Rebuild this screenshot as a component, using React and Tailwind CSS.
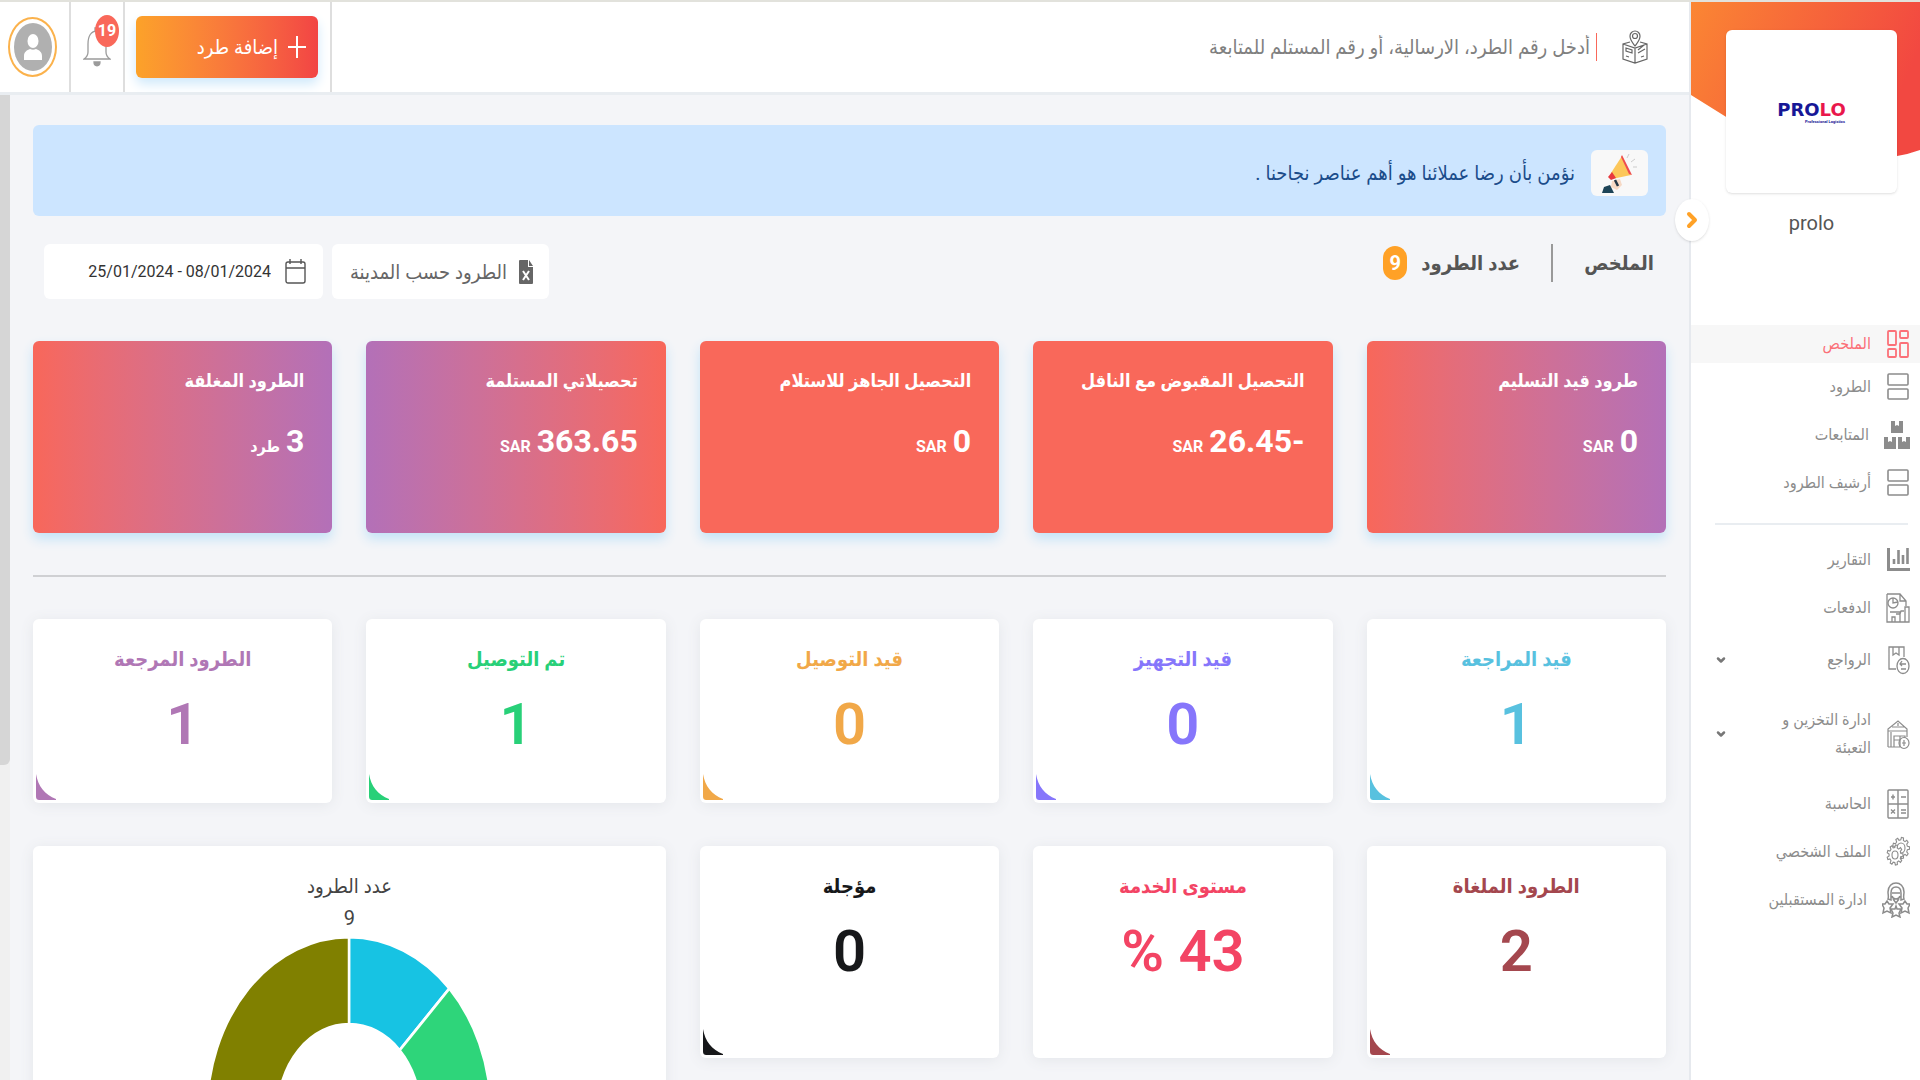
import { ChevronDown, ChevronRight } from 'lucide-react'

const NAV_TOP = [
  { key: 'summary', label: 'الملخص', icon: GridIcon, active: true },
  { key: 'parcels', label: 'الطرود', icon: RowsIcon },
  { key: 'follow', label: 'المتابعات', icon: BoxesIcon },
  { key: 'archive', label: 'أرشيف الطرود', icon: RowsIcon },
]

const NAV_BOTTOM = [
  { key: 'reports', label: 'التقارير', icon: ReportsIcon, height: 'h-12' },
  { key: 'payments', label: 'الدفعات', icon: PaymentsIcon, height: 'h-12' },
  { key: 'returns', label: 'الرواجع', icon: ReturnsIcon, height: 'h-14', expandable: true },
  { key: 'storage', label: 'ادارة التخزين و التعبئة', icon: WarehouseIcon, height: 'h-[92px]', expandable: true },
  { key: 'calc', label: 'الحاسبة', icon: CalcIcon, height: 'h-12' },
  { key: 'profile', label: 'الملف الشخصي', icon: GearsIcon, height: 'h-12' },
  { key: 'receivers', label: 'ادارة المستقبلين', icon: ReceiversIcon, height: 'h-12' },
]

const MONEY = [
  { title: 'طرود قيد التسليم', value: '0', unit: 'SAR', bg: 'bg-gradient-to-r from-[#f8675a] to-[#b370b8]' },
  { title: 'التحصيل المقبوض مع الناقل', value: '-26.45', unit: 'SAR', bg: 'bg-[#f9685a]' },
  { title: 'التحصيل الجاهز للاستلام', value: '0', unit: 'SAR', bg: 'bg-[#f9685a]' },
  { title: 'تحصيلاتي المستلمة', value: '363.65', unit: 'SAR', bg: 'bg-gradient-to-l from-[#f8675a] to-[#b370b8]' },
  { title: 'الطرود المغلقة', value: '3', unit: 'طرد', bg: 'bg-gradient-to-r from-[#f8675a] to-[#b370b8]' },
]

const STATUS = [
  { title: 'قيد المراجعة', value: '1', color: 'text-[#58c1df]' },
  { title: 'قيد التجهيز', value: '0', color: 'text-[#8676fb]' },
  { title: 'قيد التوصيل', value: '0', color: 'text-[#f1a848]' },
  { title: 'تم التوصيل', value: '1', color: 'text-[#28d078]' },
  { title: 'الطرود المرجعة', value: '1', color: 'text-[#b077b5]' },
]

const EXTRA = [
  { title: 'الطرود الملغاة', value: '2', color: 'text-[#a4474e]' },
  { title: 'مستوى الخدمة', value: '43 %', color: 'text-[#f34464]', plain: true },
  { title: 'مؤجلة', value: '0', color: 'text-[#17181a]' },
]

/* ---------- icons ---------- */

function Icon({ children, className = 'w-6 h-8', box = '0 0 24 32', width = 1.3 }) {
  return (
    <svg viewBox={box} className={`shrink-0 ${className}`} fill="none" stroke="currentColor" strokeWidth={width} aria-hidden="true">
      {children}
    </svg>
  )
}

function GridIcon() {
  return (
    <Icon width={1.8}>
      <rect x="2" y="3" width="8" height="14" rx="1" />
      <rect x="14" y="3" width="8" height="7" rx="1" />
      <rect x="2" y="21" width="8" height="8" rx="1" />
      <rect x="14" y="15" width="8" height="14" rx="1" />
    </Icon>
  )
}

function RowsIcon() {
  return (
    <Icon width={1.6}>
      <rect x="2" y="3" width="20" height="11" rx="1" />
      <rect x="2" y="18" width="20" height="10" rx="1" />
    </Icon>
  )
}

function BoxesIcon() {
  return (
    <Icon className="w-[26px] h-8" box="0 0 26 32">
      <g fill="currentColor" stroke="none">
        <path d="M7 2h4v5l2-1 2 1V2h4v12H7z" />
        <path d="M0 18h4v5l2-1 2 1v-5h4v12H0z" />
        <path d="M14 18h4v5l2-1 2 1v-5h4v12H14z" />
      </g>
    </Icon>
  )
}

function ReportsIcon() {
  return (
    <Icon width={3}>
      <path d="M2.5 4v21.5H24" />
      <path d="M8 20v-5M12.500 20V6M17 20v-9M21.500 20V4" strokeWidth="2.600" />
    </Icon>
  )
}

function PaymentsIcon() {
  return (
    <Icon>
      <path d="M1 2h13l6 7v5M1 2v28h22V15h-4v15M14 2v7h6" />
      <circle cx="7" cy="11" r="5" />
      <path d="M7 6v5l5-1M4 20h10v10M6 30v-5h3v5M10 22h4M14 22l1-3h3" />
    </Icon>
  )
}

function ReturnsIcon() {
  return (
    <Icon>
      <path d="M10 25H3V3h15v10M7 3v8l3-2 3 2V3" />
      <ellipse cx="17" cy="22" rx="6" ry="7.500" />
      <path d="M14 20h6M16 17l-2 3 2 2M15 25h5" />
    </Icon>
  )
}

function WarehouseIcon() {
  return (
    <Icon width={1.2}>
      <path d="M2 29V11L12 3l9 8v8M2 13h19M6 9h12M5 29V14M8 29V18h6v11M14 18h5v2M12 5v3M8 22h6" />
      <ellipse cx="18" cy="25" rx="5" ry="5.500" />
      <path d="M18 22v6M16 25h4M2 29h12" />
    </Icon>
  )
}

function CalcIcon() {
  return (
    <Icon width={1.4}>
      <rect x="2" y="2" width="20" height="28" rx="1" />
      <path d="M12 2v28M2 16h20M5 9h4M7 6.500v5M15 9h5M15 22h5M15 25h5M5 21.500l4 4M9 21.500l-4 4" />
    </Icon>
  )
}

// toothed outline around (cx, cy), a bit taller than wide
function gearPath(cx, cy, outer, inner, teeth) {
  const step = (Math.PI * 2) / teeth
  const pts = []
  for (let i = 0; i < teeth; i++) {
    for (const [k, r] of [[-0.3, inner], [-0.18, outer], [0.18, outer], [0.3, inner]]) {
      const a = (i + k) * step
      pts.push(`${(cx + r * Math.cos(a)).toFixed(2)} ${(cy + r * 1.25 * Math.sin(a)).toFixed(2)}`)
    }
  }
  return `M${pts.join('L')}Z`
}

function GearsIcon() {
  return (
    <Icon width={1.1}>
      <path d={gearPath(15, 12, 8.5, 6.5, 9)} />
      <ellipse cx="15" cy="12" rx="4" ry="5" />
      <path d={gearPath(9, 19, 8, 6, 9)} fill="#fff" />
      <ellipse cx="9" cy="19" rx="3" ry="4" />
    </Icon>
  )
}

function ReceiversIcon() {
  return (
    <Icon className="w-7 h-9" box="0 0 28 36" width={1.5}>
      <path d="M6 17c1-2 0-4 0-7 0-6 4-9 8-9s8 3 8 9c0 3-1 5 0 7l-3 1v-7c0-4-2-6-5-6s-5 2-5 6v7zM10 11h8M10 14c1 4 7 4 8 0M11 17l3 4 3-4" />
      <path d="M5 19l2 3h4l-3 4 1 5-4-2-4 2 1-5-2-4h3zM23 19l-2 3h-4l3 4-1 5 4-2 4 2-1-5 2-4h-3z" />
      <path d="M14 24l1 3 4 0-2 4 1 4-4-2-4 2 1-4-2-4 4 0z" fill="#fff" />
    </Icon>
  )
}

function TrackIcon() {
  return (
    <Icon className="w-7 h-9 text-[#666]" box="0 0 28 36" width={1.2}>
      <path d="M14 17c-3-4-5-6-5-10a5 5 0 0 1 10 0c0 4-2 6-5 10z" />
      <circle cx="14" cy="7" r="2.500" />
      <path d="M9 13l-7 2v15l12 4 12-4V15l-7-2M2 15l12 4 12-4M14 19v15M5 19l6 2v3l-6-2zM17 24l7-4M17 21l6-5M5 27l3 1M20 28l3-1" />
    </Icon>
  )
}

function BellIcon() {
  return (
    <Icon className="w-7 h-10 text-[#9b9b9b]" box="0 0 28 40">
      <path d="M5 25V17c0-8 3-13 9-13s9 5 9 13v8c0 3 1 5 4 7H1c3-2 4-4 4-7zM12 4V1h4v3" />
      <path d="M11 35h6c0 5-6 5-6 0z" fill="currentColor" />
    </Icon>
  )
}

function MegaphoneIcon() {
  return (
    <svg viewBox="0 0 57 46" className="h-[46px] w-[57px] shrink-0 rounded-md bg-[#f8f8f8]" aria-hidden="true">
      <path d="M31 6l9 19-19 4-1-6z" fill="#fcc75a" />
      <path d="M31 5l10 20-3-1-8-17z" fill="#ee4b50" />
      <path d="M21 22l4 6-5 2-3-3z" fill="#e8383d" />
      <path d="M21 31l8-2 2 6-5 5-6-3z" fill="#f6d9c5" />
      <path d="M24 30l3 6" stroke="#243746" strokeWidth="2.500" />
      <path d="M13 37l6-2 4 8H11z" fill="#1d4457" />
      <path d="M36 8l2-4M40 12l4-3M42 17l4 0" stroke="#ccc" strokeWidth="1" />
    </svg>
  )
}

/* ---------- sidebar ---------- */

function NavItem({ item, height = 'h-12' }) {
  const Glyph = item.icon
  return (
    <li>
      <a
        href={`#${item.key}`}
        className={`flex items-center gap-[15px] pr-[10px] pl-6 text-base ${height} ${
          item.active ? 'bg-[#f7f7f7] text-[#fb7078]' : 'text-[#8c8c8c]'
        }`}
      >
        <Glyph />
        <span className={item.expandable ? 'w-[92px] leading-7' : 'flex-1 leading-7'}>{item.label}</span>
        {item.expandable && <ChevronDown className="mr-auto size-3 text-[#777]" strokeWidth={5} />}
      </a>
    </li>
  )
}

function Sidebar() {
  return (
    <aside className="relative w-[231px] shrink-0 border-l-2 border-[#e6e9ee] bg-white">
      <svg viewBox="0 0 230 160" preserveAspectRatio="none" className="absolute top-0 right-0 h-40 w-full" aria-hidden="true">
        <defs>
          <linearGradient id="wave" x1="0" y1="0" x2="1" y2="0.300">
            <stop offset="0" stopColor="#fb8633" />
            <stop offset="1" stopColor="#f24841" />
          </linearGradient>
        </defs>
        <path d="M0 0H230V148Q219 152 207 154C180 156 150 150 120 140C90 130 60 129 37 116L0 93Z" fill="url(#wave)" />
      </svg>

      <div className="relative flex flex-col items-center pt-7 pl-3" dir="ltr">
        <div className="flex h-[163px] w-[171px] flex-col items-center justify-center rounded-md bg-white shadow">
          <div className="font-['DejaVu_Sans',sans-serif] text-lg leading-5 font-bold text-[#171796]">
            PRO<span className="text-[#e9174b]">LO</span>
          </div>
          <div className="w-[67px] text-right text-[4px] leading-[4px] font-bold text-[#171796]">Professional Logistics</div>
        </div>
        <div className="mt-4 text-xl leading-7 text-[#555]">prolo</div>
      </div>

      <button
        aria-label="طي القائمة"
        className="absolute top-[197px] -left-4 z-10 flex h-[42px] w-[34px] items-center justify-center rounded-[50%] bg-white text-[#ffa126] shadow-sm"
      >
        <ChevronRight className="size-6" strokeWidth={4} />
      </button>

      <nav className="mt-[88px]">
        <ul>
          {NAV_TOP.map((n) => (
            <NavItem key={n.key} item={n} height={n.active ? 'h-[38px]' : 'h-12'} />
          ))}
        </ul>
        <hr className="mt-4 mr-3 mb-[11px] ml-6 border-t-2 border-[#e9edf1]" />
        <ul>
          {NAV_BOTTOM.map((n) => (
            <NavItem key={n.key} item={n} height={n.height} />
          ))}
        </ul>
      </nav>
    </aside>
  )
}

/* ---------- header ---------- */

function Header() {
  return (
    <header className="flex h-[93px] shrink-0 items-stretch border-b-[3px] border-[#e9edf1] bg-white">
      <label className="flex flex-1 items-center pr-10 text-xl">
        <TrackIcon />
        <span className="mr-6 h-7 w-px bg-[#f9685a]" />
        <input
          type="text"
          aria-label="بحث"
          placeholder="أدخل رقم الطرد، الارسالية، أو رقم المستلم للمتابعة"
          className="flex-1 bg-transparent px-[6px] outline-none placeholder:text-[#808080]"
        />
      </label>
      <div className="flex items-center border-r-2 border-[#dedede] pr-3 pl-[11px]">
        <button className="flex h-[62px] w-[182px] items-center gap-[10px] rounded-md bg-gradient-to-l from-[#f24444] to-[#fca229] pr-3 text-xl text-white shadow-[0_6px_12px_#cfe9fb]">
          <svg viewBox="0 0 18 24" className="h-6 w-[18px]" stroke="currentColor" strokeWidth="2" aria-hidden="true">
            <path d="M9 1v22M0 12h18" />
          </svg>
          إضافة طرد
        </button>
      </div>
      <div className="flex w-[54px] items-center justify-center border-r-2 border-[#dedede]">
        <button aria-label="الإشعارات" className="relative">
          <BellIcon />
          <span className="absolute -top-3 left-3 flex h-8 w-6 items-center justify-center rounded-[50%] bg-[#f9685a] text-base font-bold text-white">
            19
          </span>
        </button>
      </div>
      <div className="flex w-[71px] items-center justify-end border-r-2 border-[#dedede] pl-2">
        <button aria-label="الحساب" className="flex h-[60px] w-[49px] items-center justify-center rounded-[50%] border-2 border-[#fbb24c]">
          <svg viewBox="0 0 38 48" className="h-12 w-[38px]" aria-hidden="true">
            <ellipse cx="19" cy="24" rx="19" ry="24" fill="#b0b0b0" />
            <ellipse cx="19" cy="18" rx="5.500" ry="7" fill="#fff" />
            <path d="M10 37v-4c0-4 3-6 6-7 2 1 4 1 6 0 3 1 6 3 6 7v4z" fill="#fff" />
          </svg>
        </button>
      </div>
    </header>
  )
}

/* ---------- cards ---------- */

function MoneyCard({ card }) {
  return (
    <div className={`h-48 rounded-md px-7 pt-6 text-white shadow-[0_6px_12px_#c4e3f7] ${card.bg}`}>
      <h3 className="text-lg leading-8 font-bold whitespace-nowrap">{card.title}</h3>
      <p className="mt-5 flex items-baseline gap-[6px] font-bold">
        <span className="text-[32px] leading-12">{card.value}</span>
        <span className="text-base">{card.unit}</span>
      </p>
    </div>
  )
}

function StatusCard({ card, height }) {
  return (
    <div className={`relative rounded-md bg-white pt-6 text-center shadow-[0_2px_14px_#e4e6ea] ${height} ${card.color}`}>
      <h3 className="text-xl leading-8 font-bold">{card.title}</h3>
      <p className="mt-4 text-[58px] leading-[66px] font-semibold">{card.value}</p>
      {!card.plain && (
        <svg viewBox="0 0 20 26" className="absolute bottom-[3px] left-[3px] h-[26px] w-5" aria-hidden="true">
          <path d="M0 0C2 12 9 21 20 25V26H4C1 26 0 25 0 22Z" fill="currentColor" />
        </svg>
      )}
    </div>
  )
}

function ParcelChart() {
  return (
    <div className="col-span-2 rounded-md bg-white pt-6 text-center text-[#444] shadow-[0_2px_14px_#e4e6ea]">
      <div className="text-xl leading-8">عدد الطرود</div>
      <div className="text-xl leading-8">9</div>
      <svg viewBox="0 0 284 352" className="mx-auto mt-[3px] h-[352px] w-[284px]" role="img" aria-label="عدد الطرود">
        <g transform="translate(142 176) scale(1 1.240)" stroke="#fff" strokeWidth="2.500">
          <path d="M0-142A142 142 0 0 1 100.400-100.400L50.600-50.600A71.500 71.500 0 0 0 0-71.500Z" fill="#17c3e3" />
          <path d="M100.400-100.400A142 142 0 0 1 100.400 100.400L50.600 50.600A71.500 71.500 0 0 0 50.600-50.600Z" fill="#2ed57a" />
          <path d="M100.400 100.400A142 142 0 0 1 0 142V71.500A71.500 71.500 0 0 0 50.600 50.600Z" fill="#f1a848" />
          <path d="M0 142A142 142 0 0 1 0-142V-71.500A71.500 71.500 0 0 0 0 71.500Z" fill="#808000" />
        </g>
      </svg>
    </div>
  )
}

export default function App() {
  return (
    <div
      dir="rtl"
      className="flex h-screen overflow-hidden border-t-2 border-[#e2e2dc] bg-[#f4f5f8] font-[Roboto,'DejaVu_Sans_Condensed','DejaVu_Sans',sans-serif]"
    >
      <Sidebar />

      <div className="flex min-w-0 flex-1 flex-col">
        <Header />

        <div className="flex min-h-0 flex-1">
          <main className="min-w-0 flex-1 overflow-y-auto px-[23px] pt-[30px] [scrollbar-width:none]">
            <div className="flex h-[91px] items-center gap-4 rounded-md bg-[#cce5ff] px-[18px] pt-1 text-xl text-[#1b4c8a]">
              <MegaphoneIcon />
              <p>نؤمن بأن رضا عملائنا هو أهم عناصر نجاحنا .</p>
            </div>

            <div className="mt-7 flex items-start justify-between pr-3 pl-[11px]">
              <div className="flex h-[38px] items-center text-xl font-bold text-[#555]">
                <h1>الملخص</h1>
                <span className="mx-[31px] h-[38px] w-[2px] bg-[#999]" />
                <h2>عدد الطرود</h2>
                <span className="mr-[14px] flex h-[34px] w-6 items-center justify-center rounded-full bg-[#ffa126] text-xl text-white">9</span>
              </div>
              <div className="flex gap-[9px]">
                <button className="flex h-[55px] w-[217px] items-center gap-3 rounded-md bg-white pr-4 text-xl text-[#666]">
                  <svg viewBox="0 0 14 24" className="h-6 w-[14px] shrink-0" aria-hidden="true">
                    <path d="M1 0h8v7h5v16q0 1-1 1H1q-1 0-1-1V1q0-1 1-1zM10 0l4 6h-4z" fill="#666" />
                    <path d="M4 11l6 9M10 11l-6 9" stroke="#fff" strokeWidth="2" />
                  </svg>
                  الطرود حسب المدينة
                </button>
                <label className="flex h-[55px] w-[279px] items-center gap-[14px] rounded-md bg-white pr-[17px] text-base text-[#333]">
                  <svg viewBox="0 0 21 25" className="h-[25px] w-[21px] shrink-0" fill="none" stroke="#555" strokeWidth="1.400" aria-hidden="true">
                    <rect x="1" y="3" width="19" height="21" rx="2" />
                    <path d="M1 9h19M5 0v5M16 0v5" />
                  </svg>
                  <input
                    type="text"
                    dir="ltr"
                    aria-label="الفترة"
                    defaultValue="25/01/2024 - 08/01/2024"
                    className="w-full min-w-0 bg-transparent text-right outline-none"
                  />
                </label>
              </div>
            </div>

            <section className="mt-[42px] grid grid-cols-5 gap-x-[34px]">
              {MONEY.map((c) => (
                <MoneyCard key={c.title} card={c} />
              ))}
            </section>

            <hr className="my-[42px] border-t-2 border-[#cfd0d3]" />

            <section className="grid grid-cols-5 gap-x-[34px] gap-y-[43px] pb-8">
              {STATUS.map((c) => (
                <StatusCard key={c.title} card={c} height="h-[184px]" />
              ))}
              {EXTRA.map((c) => (
                <StatusCard key={c.title} card={c} height="h-[212px]" />
              ))}
              <ParcelChart />
            </section>
          </main>

          {/* scroll track */}
          <div className="w-[10px] shrink-0 bg-[#f0f0f0]">
            <div className="h-[68%] rounded-br-md bg-[#d6d6d6]" />
          </div>
        </div>
      </div>
    </div>
  )
}
